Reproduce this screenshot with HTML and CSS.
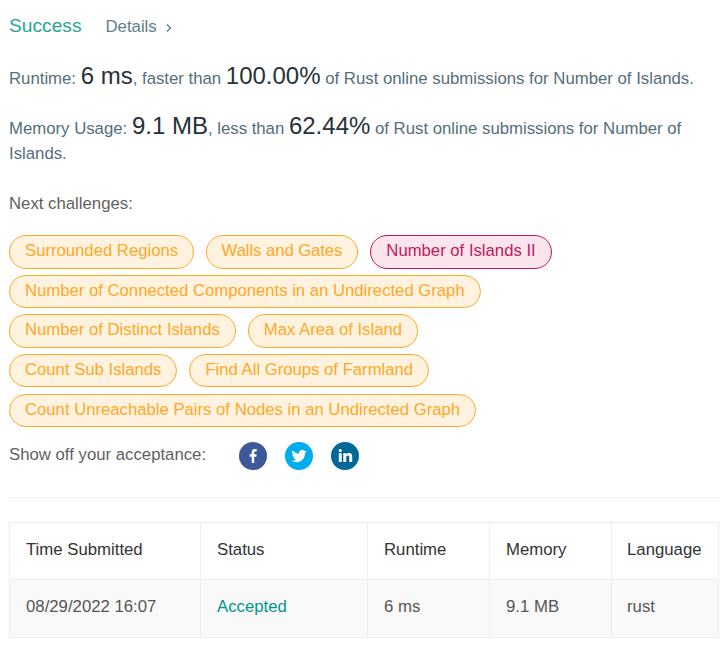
FILE: index.html
```html
<!DOCTYPE html>
<html lang="en">
<head>
<meta charset="utf-8">
<title>Submission result</title>
<link rel="stylesheet" href="styles.css">
</head>
<body>
<main class="page">
  <div class="result-head">
    <span class="success">Success</span>
    <a class="details">Details
      <svg class="chev" viewBox="0 0 8 12" width="8" height="12"><path d="M2 2.500 5.500 6 2 9.500" fill="none" stroke="#607d8b" stroke-width="1.4"/></svg>
    </a>
  </div>
  <p class="stat stat-runtime">Runtime: <b>6 ms</b>, faster than <b>100.00%</b> of Rust online submissions for Number of Islands.</p>
  <p class="stat stat-memory">Memory Usage: <b>9.1 MB</b>, less than <b>62.44%</b> of Rust online submissions for Number of Islands.</p>
  <p class="next">Next challenges:</p>
  <div class="pills">
    <a class="pill">Surrounded Regions</a>
    <a class="pill pill-tight">Walls and Gates</a>
    <a class="pill pill-hard">Number of Islands II</a>
    <a class="pill">Number of Connected Components in an Undirected Graph</a>
    <a class="pill">Number of Distinct Islands</a>
    <a class="pill">Max Area of Island</a>
    <a class="pill">Count Sub Islands</a>
    <a class="pill">Find All Groups of Farmland</a>
    <a class="pill">Count Unreachable Pairs of Nodes in an Undirected Graph</a>
  </div>
  <div class="share">
    <span class="share-label">Show off your acceptance:</span>
    <div class="share-icons">
      <a class="social fb"><svg viewBox="0 0 28 28" width="28" height="28"><path fill="#fff" d="M15.200 21v-6.300h2.100l.35-2.500H15.200v-1.500c0-.75.25-1.250 1.250-1.250h1.300V7.200c-.25 0-1-.1-1.900-.1-1.900 0-3.150 1.150-3.150 3.250v1.850h-2.100v2.500h2.100V21z"/></svg></a>
      <a class="social tw"><svg viewBox="0 0 28 28" width="28" height="28"><path fill="#fff" d="M21.600 9.400c-.55.25-1.150.4-1.750.5.65-.4 1.100-1 1.350-1.700-.6.35-1.250.6-1.950.75a3.070 3.070 0 0 0-5.250 2.800 8.700 8.700 0 0 1-6.300-3.200 3.070 3.070 0 0 0 .95 4.100c-.5 0-.95-.15-1.400-.4v.05c0 1.500 1.050 2.750 2.450 3-.45.15-.95.15-1.400.05.4 1.200 1.550 2.100 2.850 2.150a6.200 6.200 0 0 1-4.550 1.250 8.700 8.700 0 0 0 13.400-7.750c.6-.4 1.150-.95 1.600-1.600z"/></svg></a>
      <a class="social li"><svg viewBox="0 0 28 28" width="28" height="28"><path fill="#fff" d="M7.800 11.300h2.900V20H7.800zM9.250 6.900a1.650 1.650 0 1 1 0 3.300 1.650 1.650 0 0 1 0-3.300zM12.300 11.300h2.800v1.200c.4-.75 1.400-1.400 2.800-1.400 2.800 0 3.300 1.800 3.300 4.100V20h-2.900v-4.200c0-1 0-2.200-1.400-2.200s-1.700 1.050-1.700 2.150V20h-2.900z"/></svg></a>
    </div>
  </div>
  <hr class="rule">
  <table class="subs">
    <thead>
      <tr>
        <th class="c-time">Time Submitted</th>
        <th class="c-status">Status</th>
        <th class="c-runtime">Runtime</th>
        <th class="c-memory">Memory</th>
        <th class="c-lang">Language</th>
      </tr>
    </thead>
    <tbody>
      <tr>
        <td>08/29/2022 16:07</td>
        <td class="accepted">Accepted</td>
        <td>6 ms</td>
        <td>9.1 MB</td>
        <td class="c-lang">rust</td>
      </tr>
    </tbody>
  </table>
</main>
</body>
</html>
```
FILE: styles.css
```css
* { box-sizing: border-box; }
html, body { margin: 0; background: #fff; }
body {
  font-family: "Liberation Sans", Arial, sans-serif;
  font-size: 16.75px;
  color: #546e7a;
}
.page { padding: 14px 10px 0 9px; }
.result-head { display: flex; align-items: baseline; height: 24px; }
.success { font-size: 19.2px; line-height: 24px; color: #26a69a; }
.details { margin-left: 24px; color: #607d8b; line-height: 24px; display: flex; align-items: center; }
.chev { margin-left: 8px; margin-top: 2px; }
.stat { margin: 0; line-height: 25px; }
.stat b { font-weight: 400; font-size: 24px; color: #263238; }
.stat-runtime { margin-top: 25px; }
.stat-memory { margin-top: 22px; }
.next { margin: 26px 0 0; line-height: 24px; color: #5f5f5f; }
.pills { display: flex; flex-wrap: wrap; gap: 6.2px 12px; margin-top: 19.2px; max-width: 580px; }
.pill {
  height: 33.4px;
  line-height: 29px;
  padding: 0 15px;
  border: 1px solid #ffa726;
  border-radius: 17px;
  background: #fff3e0;
  color: #ffa726;
  font-size: 16.7px;
}
.pill-tight { padding-left: 14.500px; letter-spacing: -0.07px; }
.pill-hard { border-color: #c2185b; background: #fce4ec; color: #c2185b; }
.share { display: flex; align-items: center; margin-top: 12.2px; height: 32px; }
.share-label { color: #5f5f5f; }
.share-icons { display: flex; gap: 18px; margin-left: 33px; margin-top: 1px; }
.social { display: block; width: 28px; height: 28px; border-radius: 50%; }
.social svg { display: block; }
.fb { background: #3b5998; }
.tw { background: #00aced; }
.li { background: #006999; }
.rule { border: 0; border-top: 1px solid #eee; margin: 26px 0 24px; }
.subs { width: 709px; border-collapse: collapse; table-layout: fixed; color: #333; }
.subs th, .subs td { border: 1px solid #eee; padding: 0 16px; text-align: left; font-weight: 400; }
.subs th { height: 57px; padding-bottom: 2px; color: #333; }
.subs td { height: 58px; padding-bottom: 4px; background: #f9f9f9; color: #555; }
.c-time { width: 191px; }
.c-status { width: 167px; }
.c-runtime { width: 122px; }
.c-memory { width: 122px; }
.subs .c-lang { width: 107px; padding-left: 15px; }
.subs .accepted { color: #009688; }
```
